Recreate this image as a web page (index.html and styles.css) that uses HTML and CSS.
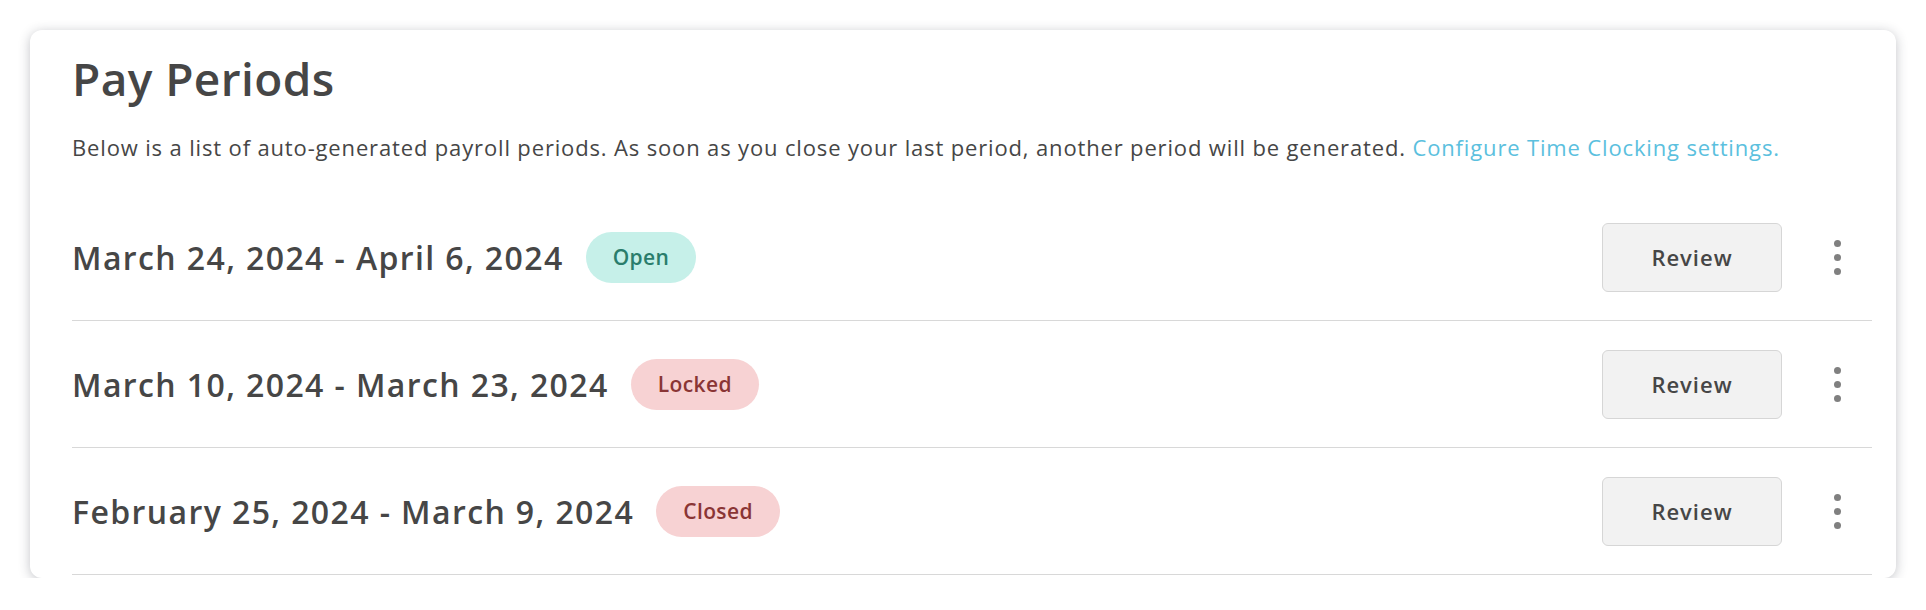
FILE: index.html
```html
<!DOCTYPE html>
<html lang="en">
<head>
<meta charset="utf-8">
<title>Pay Periods</title>
<link rel="stylesheet" href="styles.css">
</head>
<body>
<section class="card">
  <h1 class="title">Pay Periods</h1>
  <p class="desc">Below is a list of auto-generated payroll periods. As soon as you close your last period, another period will be generated. <a class="link" href="#">Configure Time Clocking settings.</a></p>
  <ul class="rows">
    <li class="row">
      <span class="range">March 24, 2024 - April 6, 2024</span>
      <span class="badge badge-open">Open</span>
      <span class="spacer"></span>
      <button class="review">Review</button>
      <button class="kebab" aria-label="More"><i></i><i></i><i></i></button>
    </li>
    <li class="row">
      <span class="range">March 10, 2024 - March 23, 2024</span>
      <span class="badge badge-red">Locked</span>
      <span class="spacer"></span>
      <button class="review">Review</button>
      <button class="kebab" aria-label="More"><i></i><i></i><i></i></button>
    </li>
    <li class="row">
      <span class="range">February 25, 2024 - March 9, 2024</span>
      <span class="badge badge-red">Closed</span>
      <span class="spacer"></span>
      <button class="review">Review</button>
      <button class="kebab" aria-label="More"><i></i><i></i><i></i></button>
    </li>
  </ul>
</section>
</body>
</html>
```
FILE: styles.css
```css
* { box-sizing: border-box; }
html, body { margin: 0; background: #ffffff; }
body {
  font-family: "Open Sans", "Liberation Sans", sans-serif;
  color: #464646;
  padding: 30px 30px 0 30px;
}
.card {
  width: 1866px;
  height: 548px;
  background: #fff;
  border-radius: 12px;
  box-shadow: 0 2px 12px rgba(40, 44, 56, 0.28);
  padding: 0 24px 0 42px;
  overflow: hidden;
}
.title {
  margin: 0;
  padding-top: 20px;
  font-size: 46px;
  line-height: 56px;
  font-weight: 600;
  letter-spacing: 0.4px;
  color: #464646;
}
.desc {
  margin: 27px 0 0 0;
  font-size: 22px;
  line-height: 28px;
  letter-spacing: 0.85px;
  color: #464646;
}
.link { color: #5bc0de; text-decoration: none; }
.rows {
  list-style: none;
  margin: 33px 0 0 0;
  padding: 0;
}
.row {
  display: flex;
  align-items: center;
  height: 127px;
  border-bottom: 1px solid #d8d8d8;
}
.range {
  font-size: 32px;
  font-weight: 600;
  letter-spacing: 1.4px;
  color: #464646;
}
.badge {
  margin-left: 22px;
  height: 51px;
  padding: 0 27px;
  border-radius: 26px;
  display: inline-flex;
  align-items: center;
  font-size: 21px;
  font-weight: 600;
  letter-spacing: 0.4px;
}
.badge-open { background: #c6f0e9; color: #2a7d6c; }
.badge-red { background: #f7d2d3; color: #8a3535; }
.spacer { flex: 1; }
.review {
  width: 180px;
  height: 69px;
  border: 1px solid #d6d6d6;
  border-radius: 6px;
  background: #f2f2f2;
  font-family: inherit;
  font-size: 22px;
  font-weight: 600;
  letter-spacing: 1px;
  color: #464646;
}
.kebab {
  margin-left: 35px;
  margin-right: 15px;
  width: 40px;
  height: 50px;
  border: 0;
  background: none;
  padding: 0;
  display: flex;
  flex-direction: column;
  align-items: center;
  justify-content: center;
  gap: 7px;
}
.kebab i {
  display: block;
  width: 7px;
  height: 7px;
  border-radius: 50%;
  background: #808080;
}
```
